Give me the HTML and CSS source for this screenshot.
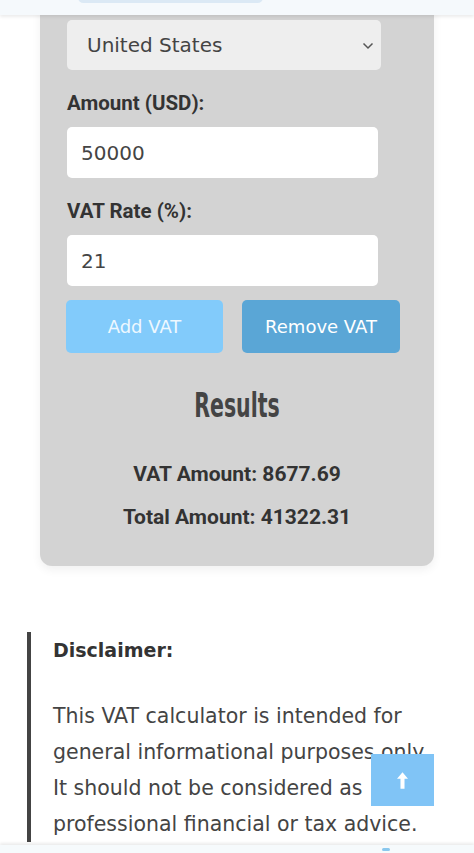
FILE: index.html
```html
<!DOCTYPE html>
<html>
<head>
<meta charset="utf-8">
<link rel="stylesheet" href="styles.css">
</head>
<body>
<div class="topbar"><div class="pill"></div></div>
<main class="page">
  <section class="card">
    <div class="select">
      <span>United States</span>
      <svg class="chev" width="12" height="8" viewBox="0 0 12 8"><path d="M1.5 1.5 L6 6 L10.5 1.5" fill="none" stroke="#555" stroke-width="1.5"/></svg>
    </div>
    <label class="label">Amount (USD):</label>
    <div class="input">50000</div>
    <label class="label">VAT Rate (%):</label>
    <div class="input">21</div>
    <div class="buttons">
      <button class="btn add">Add VAT</button>
      <button class="btn remove">Remove VAT</button>
    </div>
    <div class="results-head"><h2 class="results-title">Results</h2></div>
    <p class="result">VAT Amount: 8677.69</p>
    <p class="result">Total Amount: 41322.31</p>
  </section>
  <section class="disclaimer">
    <h3>Disclaimer:</h3>
    <p>This VAT calculator is intended for general informational purposes only. It should not be considered as professional financial or tax advice.</p>
  </section>
</main>
<button class="totop" aria-label="Back to top">
  <svg width="11" height="17" viewBox="0 0 12 18"><path d="M6 0 L12 7 L8.2 7 L8.2 18 L3.8 18 L3.8 7 L0 7 Z" fill="#fff"/></svg>
</button>
<div class="bottombar"><span class="dot"></span></div>
</body>
</html>
```
FILE: styles.css
```css
* { box-sizing: border-box; }
html, body { margin: 0; padding: 0; background: #fff; }
body { font-family: "DejaVu Sans", "Open Sans", sans-serif; color: #444; overflow: hidden; height: 853px; }

.topbar {
  position: fixed; top: 0; left: 0; right: 0; height: 15px;
  background: #f5f9fc;
  box-shadow: 0 2px 3px rgba(0,0,0,0.08);
  z-index: 5;
}
.pill {
  position: absolute; left: 78px; top: -8px; width: 185px; height: 11px;
  background: #dbe9f5; border-radius: 6px;
}

.page { display: flex; flex-direction: column; }

.card {
  margin: 0 40px;
  background: #d3d3d3;
  border-radius: 0 0 12px 12px;
  padding: 20px 0 0 27px;
  height: 566px;
  box-shadow: 0 4px 10px rgba(0,0,0,0.06);
  display: flex; flex-direction: column;
}

.select {
  width: 314px; height: 50px;
  background: #eeeeee;
  border-radius: 5px;
  display: flex; align-items: center; justify-content: space-between;
  padding: 0 7px 0 20px;
  font-size: 20px; color: #444;
}
.chev { margin-top: 1px; }

.label {
  font-family: Roboto, sans-serif; font-weight: 700;
  font-size: 20.5px; color: #333;
  margin-top: 21px; height: 24px; line-height: 24px;
}
.input {
  margin-top: 12px;
  width: 311px; height: 51px;
  background: #fff; border-radius: 5px;
  display: flex; align-items: center;
  padding-left: 14px;
  font-size: 20px; color: #444;
}

.buttons {
  display: flex; gap: 19px; margin-top: 14px; margin-left: -1px;
}
.btn {
  width: 157px; height: 53px; border: 0; border-radius: 5px; padding: 0;
  font-family: "DejaVu Sans", sans-serif; font-size: 18px; color: #fff;
}
.btn.add { background: #82cbfb; color: #eef8ff; }
.btn.remove { background: #5aa6d6; width: 158px; }

.results-head {
  margin: 34px 0 0 -27px; text-align: center; height: 38px;
}
.results-title {
  display: inline-block; margin: 0;
  font-family: "DejaVu Sans Condensed", "DejaVu Sans", sans-serif;
  font-weight: 700; font-size: 33px; color: #444;
  line-height: 38px;
  transform: scaleX(0.69);
}
.result {
  margin: 0 0 0 -27px; text-align: center;
  font-family: Roboto, sans-serif; font-weight: 700; font-size: 21px; color: #333;
  line-height: 24px;
}
.results-head + .result { margin-top: 37px; }
.result + .result { margin-top: 19px; }

.disclaimer {
  margin: 66px 0 0 27px;
  border-left: 4px solid #444;
  padding: 4px 16px 0 22px;
}
.disclaimer h3 {
  margin: 0; font-size: 19px; font-weight: 700; color: #333; line-height: 28px;
}
.disclaimer p {
  margin: 34px 0 0; max-width: 390px; font-size: 20.5px; line-height: 36px; color: #444;
}

.totop {
  position: fixed; right: 40px; bottom: 47px;
  width: 63px; height: 52px; border: 0; padding: 0;
  background: #80c4f6;
  display: flex; align-items: center; justify-content: center;
  z-index: 6;
}
.bottombar {
  position: fixed; left: 0; right: 0; bottom: 0; height: 8px;
  background: #f6fafc;
  box-shadow: 0 -2px 3px rgba(0,0,0,0.08);
  z-index: 7;
}
.dot {
  position: absolute; left: 382px; top: 3px; width: 8px; height: 3px;
  background: #8ac8ee; border-radius: 2px;
}
```
